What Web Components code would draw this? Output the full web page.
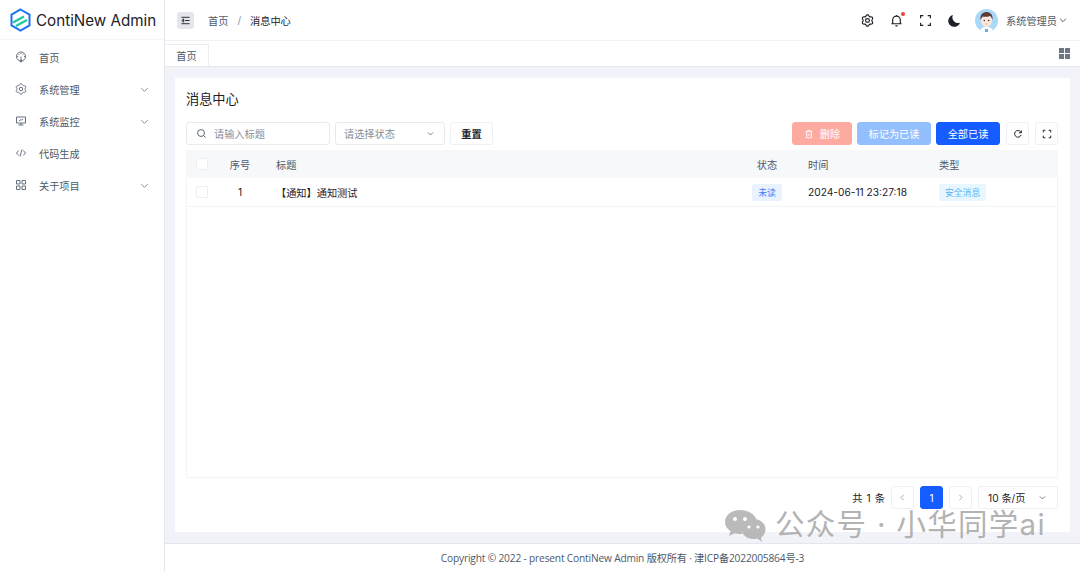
<!DOCTYPE html>
<html lang="zh"><head><meta charset="utf-8"><title>消息中心</title>
<style>html,body{margin:0;height:571px;overflow:hidden;background:#fff;font-family:Inter,"Noto Sans CJK SC",sans-serif}</style>
</head><body>
<app-shell></app-shell>
<script>
const FONT='Inter,"Noto Sans CJK SC",sans-serif';
let gearPath='';
for(let k=0;k<72;k++){const a=k/72*2*Math.PI,r=9.300+1.300*Math.cos(6*a);gearPath+=(k?'L':'M')+(12+r*Math.sin(a)).toFixed(2)+' '+(12-r*Math.cos(a)).toFixed(2)}
gearPath+='z';
const I={
 dash:'<circle cx="12" cy="11" r="9"/><path d="M12 11v7M12 4v2M6 11H4M20 11h-2M7 6l1.500 1.500M17 6l-1.500 1.500"/><circle cx="12" cy="20" r="2"/>',
 gear:`<path d="${gearPath}"/><circle cx="12" cy="12" r="3.500"/>`,
 monitor:'<path d="M3 4h18v12H3zM12 16v4M7 20h10M8 12l4-3 1.500 1.500L16 8"/>',
 code:'<path d="M7.500 7L3 12l4.500 5M16.500 7l4.500 5-4.500 5M14 5l-4 14"/>',
 apps:'<path d="M3 3h7v7H3zM14 3h7v7h-7zM3 14h7v7H3zM14 14h7v7h-7z"/>',
 down:'<path d="M5 9l7 7 7-7"/>',
 left:'<path d="M15 5l-7 7 7 7"/>',
 right:'<path d="M9 5l7 7-7 7"/>',
 search:'<circle cx="11" cy="11" r="7.500"/><path d="M16.500 16.500L21 21"/>',
 bell:'<path d="M5 18V11a7 7 0 0 1 14 0v7M2.500 18h19M10 22h4M12 2v2"/>',
 full:'<path d="M3 8V3h5M16 3h5v5M21 16v5h-5M8 21H3v-5"/>',
 refresh:'<path d="M19.500 14a8 8 0 1 1-1.500-7.500L20 9M20 3.500V9h-5.500"/>',
 trash:'<path d="M4 6h16M9 6V3h6v3M6 6v15h12V6M10 11v5M14 11v5"/>',
 fold:'<path d="M3 5h18M3 19h18M11 12h10M8 8.500L4 12l4 3.500z"/>'
};
const ico=(n,s,c,w=2)=>`<svg width="${s}" height="${s}" viewBox="0 0 24 24" fill="none" stroke="${c}" stroke-width="${w}" style="display:block;flex:none">${I[n]}</svg>`;
function def(name,css,html){
 customElements.define(name,class extends HTMLElement{
  constructor(){super();this.attachShadow({mode:'open'})}
  connectedCallback(){const h=typeof html==='function'?html(this):html;this.shadowRoot.innerHTML=`<style>${css}</style>${h}`}
 });
}
def('app-logo',`:host{display:flex;align-items:center;gap:5px;height:40px;padding-left:10px;box-sizing:border-box;border-bottom:1px solid #f5f6f8}
 span{font-size:15.200px;color:#1d2129;white-space:nowrap;padding-top:1px}`,
 `<svg width="21" height="24" viewBox="0 0 21 24" style="flex:none"><path d="M10.500 1.500L19.500 6.700V17.300L10.500 22.500 1.500 17.300V6.700z" fill="none" stroke="#1e74f0" stroke-width="2"/><path d="M3 14.500L14 8.500M6 18L17 12" stroke="#22c9a6" stroke-width="2.400" fill="none"/></svg><span>ContiNew Admin</span>`);
def('menu-item',`:host{display:flex;align-items:center;height:32px;padding-left:15px;padding-right:14px;font-size:10.200px;color:#4e5969}
 span{margin-left:12px;flex:1}`,
 t=>`${ico(t.getAttribute('icon'),12,'#4e5969',1.700)}<span>${t.getAttribute('label')}</span>${t.hasAttribute('arrow')?ico('down',11,'#6b7785',1.800):''}`);
def('side-menu',`:host{display:block;width:165px;flex:none;box-sizing:border-box;border-right:1px solid #e5e6eb;background:#fff}
 nav{display:flex;flex-direction:column;padding-top:1px}`,
 `<app-logo></app-logo><nav><menu-item icon="dash" label="首页"></menu-item><menu-item icon="gear" label="系统管理" arrow></menu-item><menu-item icon="monitor" label="系统监控" arrow></menu-item><menu-item icon="code" label="代码生成"></menu-item><menu-item icon="apps" label="关于项目" arrow></menu-item></nav>`);
def('user-avatar',`:host{display:block;width:23px;height:23px;flex:none}`,
 `<svg width="23" height="23" viewBox="0 0 23 23"><defs><clipPath id="c"><circle cx="11.500" cy="11.500" r="11.500"/></clipPath></defs><g clip-path="url(#c)"><rect width="23" height="23" fill="#a9d8f8"/><path d="M5 23c0-4 3-5 6.500-5s6.500 1 6.500 5z" fill="#fff"/><path d="M10 20h3v3h-3z" fill="#6aa6e8"/><ellipse cx="11.500" cy="11.500" rx="5.500" ry="6.500" fill="#fde6da"/><path d="M5.500 11c-.8-6 3-8 6-8s6.800 2 6 8c-.5-2-1.500-3.500-2.500-4-2 1-6 1-7 .5-1 .8-2 2-2.500 3.500z" fill="#5a3d36"/><circle cx="9.300" cy="11.500" r=".8" fill="#3a2a26"/><circle cx="13.700" cy="11.500" r=".8" fill="#3a2a26"/><path d="M10.500 15h2" stroke="#d8746c" stroke-width=".7"/></g></svg>`);
def('top-bar',`:host{display:flex;align-items:center;height:41px;flex:none;box-sizing:border-box;border-bottom:1px solid #f0f1f4;background:#fff;padding-left:12px;font-size:10.200px;color:#4e5969}
 .fold{width:17px;height:17px;border-radius:3px;background:#e5e6eb;display:flex;align-items:center;justify-content:center}
 .crumb{margin-left:14px;display:flex;gap:9px;align-items:center}
 b{font-weight:400;color:#1d2129}
 .right{margin-left:auto;display:flex;align-items:center;padding-right:12px}
 .i{width:13px;height:13px;margin-right:16px;position:relative;display:block}
 .i:nth-child(4){margin-right:14px}
 .dot{position:absolute;width:4.500px;height:4.500px;border-radius:50%;background:#f53f3f;right:-2px;top:-2px}
 .u{margin:0 1px 0 8px;white-space:nowrap}`,
 `<div class="fold">${ico('fold',11,'#1d2129',2)}</div><div class="crumb"><span>首页</span><span style="color:#86909c">/</span><b>消息中心</b></div>
 <div class="right"><span class="i">${ico('gear',13,'#1d2129',2.200)}</span><span class="i">${ico('bell',13,'#1d2129',2.200)}<i class="dot"></i></span><span class="i">${ico('full',13,'#1d2129',2.200)}</span><span class="i"><svg width="13" height="13" viewBox="0 0 24 24" style="display:block"><path d="M9 2a10.500 10.500 0 0 0 13 14A11 11 0 1 1 9 2z" fill="#1d2129"/></svg></span><user-avatar></user-avatar><span class="u">系统管理员</span>${ico('down',10,'#1d2129',1.800)}</div>`);
def('tab-bar',`:host{display:flex;align-items:flex-end;justify-content:space-between;height:26px;flex:none;box-sizing:border-box;background:#fff;border-bottom:1px solid #e5e6eb;font-size:10.200px;color:#4e5969}
 .t{width:44px;height:22px;box-sizing:border-box;border:1px solid #eceef2;border-left:0;border-bottom:0;display:flex;align-items:center;justify-content:center}
 .g{align-self:center;margin-right:10px;display:grid;grid-template-columns:5px 5px;gap:1px}
 .g i{width:5px;height:5px;background:#6b7785;display:block}`,
 `<div class="t">首页</div><div class="g"><i></i><i></i><i></i><i></i></div>`);
def('x-btn',`:host{display:inline-flex;align-items:center;justify-content:center;height:23px;box-sizing:border-box;border-radius:3px;font-size:10.200px;white-space:nowrap;gap:6px;padding:0 11px;background:var(--bg,#fff);color:var(--fg,#1d2129);border:1px solid var(--bd,#eef0f3)}`,
 `<slot></slot>`);
def('search-bar',`:host{display:flex;align-items:center;gap:5px;height:23px}
 .f{height:23px;box-sizing:border-box;border:1px solid #e8eaef;border-radius:3px;display:flex;align-items:center;font-size:10.200px;color:#86909c;background:#fff}
 .a{width:144px;padding-left:9px;gap:7px}.b{width:110px;padding:0 9px 0 8px;justify-content:space-between}
 .c{display:flex;gap:5px;margin-left:auto}`,
 `<div class="f a">${ico('search',11,'#4e5969',2)}<span>请输入标题</span></div><div class="f b"><span>请选择状态</span>${ico('down',9,'#4e5969',2)}</div><x-btn style="width:43px;padding:0;font-weight:600">重置</x-btn>
 <div class="c"><x-btn style="--bg:#fdaba0;--fg:#fff;--bd:#fdaba0;width:60px;padding:0">${ico('trash',10,'#fff',2)}<span>删除</span></x-btn><x-btn style="--bg:#94bfff;--fg:#fff;--bd:#94bfff;width:74px;padding:0">标记为已读</x-btn><x-btn style="--bg:#165dff;--fg:#fff;--bd:#165dff;width:64px;padding:0">全部已读</x-btn><x-btn style="margin-left:1px;width:23px;padding:0">${ico('refresh',10,'#1d2129',2.400)}</x-btn><x-btn style="margin-left:1px;width:23px;padding:0">${ico('full',10,'#1d2129',2.400)}</x-btn></div>`);
def('x-tag',`:host{display:inline-flex;align-items:center;height:17px;padding:0 6px;border-radius:2px;font-size:8.800px;background:var(--bg);color:var(--fg);white-space:nowrap}`,`<slot></slot>`);
def('msg-table',`:host{display:block;height:328px;box-sizing:border-box;border:1px solid #f2f3f5;border-top:0;margin-top:5px;font-size:10.200px;color:#1d2129}
 .r{display:grid;grid-template-columns:30px 46px 481px 46px 136px 1fr;align-items:center}
 .h{height:28px;background:#f7f8fa;color:#4e5969;margin:0 -1px;padding-left:1px}
 .d{height:28px;border-bottom:1px solid #f2f3f5}
 .cb{width:12px;height:12px;box-sizing:border-box;border:1px solid #eceef2;background:#fff;border-radius:2px;margin-left:9px}
 .c{text-align:center}.p{padding-left:13px}.q{padding-left:18px}.s{padding-left:13px;display:flex}
 .cc{display:flex;justify-content:center}`,
 `<div class="r h"><div><div class="cb"></div></div><div class="c">序号</div><div class="p">标题</div><div class="c">状态</div><div class="q">时间</div><div class="p">类型</div></div>
 <div class="r d"><div><div class="cb"></div></div><div class="c">1</div><div class="p">【通知】通知测试</div><div class="cc"><x-tag style="--bg:#e8f3ff;--fg:#4080ff">未读</x-tag></div><div class="q">2024-06-11 23:27:18</div><div class="s"><x-tag style="--bg:#e8f7ff;--fg:#5fb5f5">安全消息</x-tag></div></div>`);
def('x-pager',`:host{display:flex;justify-content:flex-end;align-items:center;gap:6px;height:23px;margin-top:8px;font-size:10.200px;color:#1d2129}
 .b{width:23px;height:23px;box-sizing:border-box;border:1px solid #eef0f3;border-radius:3px;display:flex;align-items:center;justify-content:center;background:#fff}
 .on{background:#165dff;border-color:#165dff;color:#fff}
 .n{white-space:nowrap;word-spacing:1.200px}
 .sz{width:80px;height:23px;box-sizing:border-box;border:1px solid #eef0f3;border-radius:3px;display:flex;align-items:center;justify-content:space-between;padding:0 10px 0 9px;white-space:nowrap}`,
 `<span class="n">共 1 条</span><div class="b">${ico('left',9,'#86909c',2)}</div><div class="b on">1</div><div class="b">${ico('right',9,'#86909c',2)}</div><div class="sz"><span>10 条/页</span>${ico('down',9,'#4e5969',2)}</div>`);
def('msg-card',`:host{display:block;flex:1;background:#fff;padding:10px 12px 0 11px;box-sizing:border-box}
 h2{margin:0;height:22px;line-height:22px;font-size:13.200px;font-weight:400;color:#1d2129}
 search-bar{margin-top:12px}`,
 `<h2>消息中心</h2><search-bar></search-bar><msg-table></msg-table><x-pager></x-pager>`);
def('app-footer',`:host{display:flex;align-items:center;justify-content:center;height:28px;flex:none;box-sizing:border-box;background:#fff;border-top:1px solid #e5e6eb;font-family:"Open Sans","Noto Sans CJK SC",sans-serif;font-size:10.200px;letter-spacing:-.18px;color:#4e5969;white-space:pre}`,
 `Copyright © 2022 - present ContiNew Admin 版权所有 · 津ICP备2022005864号-3`);
def('water-mark',`:host{position:absolute;left:724px;top:505px;display:flex;align-items:center;gap:9px;opacity:.85;pointer-events:none}
 span{font-size:29.500px;color:#a6a6a6;white-space:pre;letter-spacing:1.300px;font-family:${FONT};margin-top:-4px}`,
 `<svg width="42" height="37" viewBox="0 0 42 37"><path d="M16 4C7.500 4 1 9.500 1 16c0 3.800 2.200 7 5.500 9.200L5 30l5.500-2.800c1.800.5 3.600.8 5.500.8 1 0 1.500 0 2.300-.2-2-7.500 4-14 14-14.300C30.500 8 24 4 16 4z" fill="#aeaeae"/><path d="M41.500 23c0-6-5.800-10-12-10s-12 4-12 10 5.800 10 12 10c1.400 0 2.800-.2 4-.6L38 36l-1-4.200c2.800-2 4.500-5.200 4.500-8.800z" fill="#aeaeae"/><circle cx="11" cy="13" r="2" fill="#fff"/><circle cx="21" cy="13" r="2" fill="#fff"/><circle cx="25" cy="21" r="1.600" fill="#fff"/><circle cx="34" cy="21" r="1.600" fill="#fff"/></svg><span>公众号 · 小华同学ai</span>`);
def('app-shell',`:host{display:flex;width:1080px;height:571px;position:relative;font-family:${FONT};overflow:hidden}
 .main{flex:1;display:flex;flex-direction:column;min-width:0;background:#f2f3f8}
 .body{flex:1;display:flex;padding:11px 10px 11px 10px;min-height:0}`,
 `<side-menu></side-menu><div class="main"><top-bar></top-bar><tab-bar></tab-bar><div class="body"><msg-card></msg-card></div><app-footer></app-footer></div><water-mark></water-mark>`);
</script>
</body></html>
